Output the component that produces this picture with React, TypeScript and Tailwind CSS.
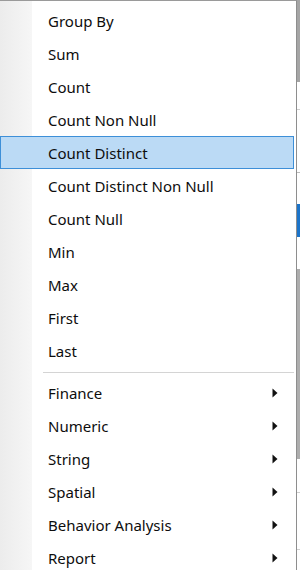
import React from 'react';

// Items of the aggregate menu
const basicItems = [
  'Group By',
  'Sum',
  'Count',
  'Count Non Null',
  'Count Distinct',
  'Count Distinct Non Null',
  'Count Null',
  'Min',
  'Max',
  'First',
  'Last',
];

const subMenus = ['Finance', 'Numeric', 'String', 'Spatial', 'Behavior Analysis', 'Report'];

const Arrow: React.FC = () => (
  <svg width="6" height="10" viewBox="0 0 6 10" className="block">
    <path d="M0.5 0.5 L5.5 5 L0.5 9.5 Z" fill="#111" />
  </svg>
);

const MenuRow: React.FC<{ label: string; active?: boolean; sub?: boolean }> = ({ label, active, sub }) => (
  <div className="relative h-[33px] flex items-center">
    {active && (
      <div className="absolute left-0 right-[2px] top-0 bottom-0 bg-[#bbdaf5] border border-[#3d8fd8]" />
    )}
    <span className="relative pl-[48px] pt-px text-[15px] text-[#0d0d0d] leading-none">{label}</span>
    {sub && (
      <span className="relative ml-auto mr-[18px]">
        <Arrow />
      </span>
    )}
  </div>
);

const App: React.FC = () => {
  return (
    <div
      className="w-[300px] h-[570px] overflow-hidden flex bg-white"
      style={{ fontFamily: '"Noto Sans", "Open Sans", sans-serif' }}
    >
      {/* Context menu */}
      <div className="relative w-[297px] h-full border-t border-t-[#9a9a9a] border-r border-r-[#8e8e8e] bg-white">
        {/* left icon gutter */}
        <div className="absolute left-0 top-0 bottom-0 w-[32px] bg-gradient-to-r from-[#ececec] to-[#f6f6f6]" />
        <div className="relative pt-[3px]">
          {basicItems.map((item) => (
            <MenuRow key={item} label={item} active={item === 'Count Distinct'} />
          ))}
          <div className="pt-[5px] pb-[3px]">
            <div className="ml-[43px] mr-[2px] h-px bg-[#d4d4d4]" />
          </div>
          {subMenus.map((item) => (
            <MenuRow key={item} label={item} sub />
          ))}
        </div>
      </div>

      {/* Window behind the menu */}
      <div className="flex-1 flex flex-col">
        <div className="h-[82px] bg-[#a5a5a5]" />
        <div className="h-[27px]" />
        <div className="h-px bg-[#cfcfcf]" />
        <div className="h-[62px]" />
        <div className="h-px bg-[#bdbdbd]" />
        <div className="h-[31px]" />
        <div className="h-[33px] bg-[#1c74c9]" />
        <div className="h-[32px]" />
        <div className="h-[190px] bg-[#adadad]" />
        <div className="h-[33px]" />
        <div className="h-px bg-[#d0d0d0]" />
        <div className="h-[56px]" />
        <div className="h-px bg-[#d0d0d0]" />
      </div>
    </div>
  );
};

export default App;
